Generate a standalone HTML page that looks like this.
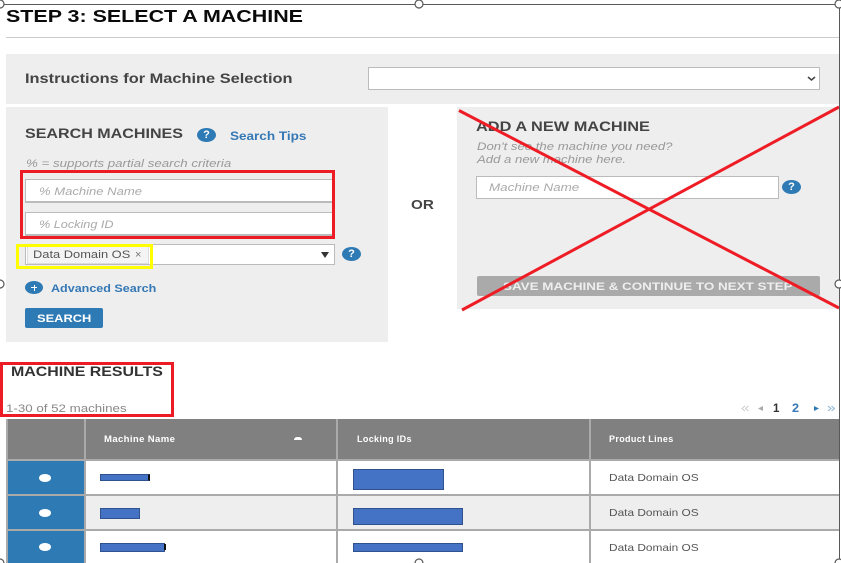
<!DOCTYPE html>
<html lang="en">
<head>
<meta charset="utf-8">
<title>Step 3: Select a Machine</title>
<style>
html,body{margin:0;padding:0;background:#fff;}
#p{position:relative;width:841px;height:563px;overflow:hidden;background:#fff;font-family:"Liberation Sans",sans-serif;}
#p div{position:absolute;box-sizing:border-box;}
.t{white-space:nowrap;line-height:14px;height:14px;transform-origin:0 50%;}
.b{font-weight:bold;}
.i{font-style:italic;}
.inp{background:#fff;border:1px solid #bbb;border-width:1px 1px 2px 1px;}
.help{width:19px;height:14px;border-radius:50%;background:#2e7ab5;color:#fff;font-size:11px;font-weight:bold;text-align:center;line-height:14px;}
.blk{background:#4472c4;border:1px solid #2f528f;}
.pl{font-size:10.5px;color:#555;transform:scaleX(1.13);}
.th{font-size:9px;font-weight:bold;color:#fff;letter-spacing:.35px;}
.sep{background:#aaa;}
</style>
</head>
<body>
<div id="p">
  <div class="t b" style="left:6px;top:9px;font-size:17.5px;line-height:15px;height:15px;transform:scaleX(1.225);color:#0a0a0a;">STEP 3: SELECT A MACHINE</div>
  <div style="left:6px;top:37px;width:833px;height:1px;background:#ccc;"></div>

  <div style="left:6px;top:54px;width:833px;height:50px;background:#eee;"></div>
  <div class="t b" style="left:25px;top:72px;font-size:13.5px;transform:scaleX(1.213);color:#444;">Instructions for Machine Selection</div>
  <div style="left:368px;top:67px;width:452px;height:23px;background:#fff;border:1px solid #bbb;"></div>
  <svg style="position:absolute;left:807px;top:76px" width="10" height="6"><path d="M1 1 L4.500 4 L8 1" fill="none" stroke="#444" stroke-width="1.500"/></svg>

  <div style="left:6px;top:107px;width:382px;height:235px;background:#eee;"></div>
  <div class="t b" style="left:25px;top:127px;font-size:13.5px;transform:scaleX(1.19);color:#444;">SEARCH MACHINES</div>
  <div class="help" style="left:197px;top:128px;">?</div>
  <div class="t b" style="left:230px;top:130px;font-size:11.5px;transform:scaleX(1.175);color:#3478b5;">Search Tips</div>
  <div class="t i" style="left:26px;top:157px;font-size:11px;transform:scaleX(1.21);color:#999;">% = supports partial search criteria</div>

  <div class="inp" style="left:25px;top:179px;width:308px;height:24px;"></div>
  <div class="t i" style="left:39px;top:185px;font-size:11px;transform:scaleX(1.186);color:#aaa;">% Machine Name</div>
  <div class="inp" style="left:25px;top:212px;width:308px;height:24px;"></div>
  <div class="t i" style="left:39px;top:218px;font-size:11px;transform:scaleX(1.15);color:#aaa;">% Locking ID</div>
  <div style="left:20px;top:170px;width:315px;height:69px;border:3.500px solid #ed1c24;"></div>

  <div style="left:25px;top:244px;width:310px;height:21px;background:#fff;border:1px solid #bbb;"></div>
  <div style="left:27px;top:246px;width:122px;height:18px;background:#f4f4f4;border:1px solid #ddd;"></div>
  <div class="t" style="left:33px;top:248px;font-size:11px;transform:scaleX(1.17);color:#555;">Data Domain OS</div>
  <div class="t" style="left:135px;top:248px;font-size:11px;color:#777;">×</div>
  <svg style="position:absolute;left:320px;top:252px" width="10" height="7"><path d="M1 0 H9 L5 6 Z" fill="#333"/></svg>
  <div style="left:16px;top:244px;width:137px;height:25px;border:3.500px solid #ff0;"></div>
  <div class="help" style="left:342px;top:247px;">?</div>

  <div style="left:25px;top:281px;width:18px;height:13px;border-radius:50%;background:#2e7ab5;"></div>
  <div style="left:31px;top:287px;width:6px;height:1px;background:#fff;"></div>
  <div style="left:34px;top:284.500px;width:1px;height:6px;background:#fff;"></div>
  <div class="t b" style="left:51px;top:282px;font-size:11px;transform:scaleX(1.14);color:#3478b5;">Advanced Search</div>
  <div style="left:25px;top:308px;width:78px;height:20px;background:#2e7ab5;border-radius:2px;"></div>
  <div class="t b" style="left:37px;top:312px;font-size:11px;transform:scaleX(1.17);color:#fff;">SEARCH</div>

  <div class="t b" style="left:411px;top:198px;font-size:13px;transform:scaleX(1.17);color:#444;">OR</div>

  <div style="left:457px;top:107px;width:382px;height:202px;background:#eee;"></div>
  <div class="t b" style="left:476px;top:120px;font-size:13.5px;transform:scaleX(1.21);color:#444;">ADD A NEW MACHINE</div>
  <div class="t i" style="left:477px;top:140px;font-size:11px;transform:scaleX(1.195);color:#999;">Don't see the machine you need?</div>
  <div class="t i" style="left:477px;top:153px;font-size:11px;transform:scaleX(1.195);color:#999;">Add a new machine here.</div>
  <div style="left:476px;top:176px;width:303px;height:23px;background:#fff;border:1px solid #bbb;"></div>
  <div class="t i" style="left:489px;top:181px;font-size:11px;transform:scaleX(1.22);color:#aaa;">Machine Name</div>
  <div class="help" style="left:782px;top:180px;">?</div>
  <div style="left:477px;top:276px;width:343px;height:20px;background:#aaa;border-radius:2px;"></div>
  <div class="t b" style="left:503px;top:280px;font-size:11px;transform:scaleX(1.22);color:#eee;">SAVE MACHINE &amp; CONTINUE TO NEXT STEP</div>

  <svg style="position:absolute;left:0;top:0" width="841" height="563">
    <line x1="459" y1="110.500" x2="839" y2="308" stroke="#ee1c25" stroke-width="3"/>
    <line x1="462" y1="310" x2="839" y2="107" stroke="#ee1c25" stroke-width="3"/>
  </svg>

  <div style="left:0;top:362px;width:174px;height:55px;border:3px solid #ed1c24;"></div>
  <div class="t b" style="left:11px;top:365px;font-size:13.5px;transform:scaleX(1.18);color:#333;">MACHINE RESULTS</div>
  <div class="t" style="left:6px;top:402px;font-size:11px;transform:scaleX(1.21);color:#888;">1-30 of 52 machines</div>

  <svg style="position:absolute;left:740px;top:403px" width="98" height="10">
    <path d="M5 3 L2 5.500 L5 8 M8.500 3 L5.500 5.500 L8.500 8" fill="none" stroke="#ccc" stroke-width="1"/>
    <path d="M23 3 V8 L18 5.500 Z" fill="#aaa"/>
    <path d="M74 3 V8 L79 5.500 Z" fill="#2e7ab5"/>
    <path d="M88 3 L91 5.500 L88 8 M91.500 3 L94.500 5.500 L91.500 8" fill="none" stroke="#8ab4d6" stroke-width="1"/>
  </svg>
  <div class="t b" style="left:773px;top:402px;font-size:11.5px;color:#333;">1</div>
  <div class="t b" style="left:792px;top:402px;font-size:11.5px;transform:scaleX(1.1);color:#3478b5;">2</div>

  <div style="left:7px;top:419px;width:832px;height:41px;background:#808080;"></div>
  <div style="left:7px;top:460px;width:77px;height:103px;background:#2e7ab5;"></div>
  <div style="left:85px;top:496px;width:754px;height:34px;background:#eee;"></div>

  <div class="sep" style="left:84px;top:419px;width:1.500px;height:144px;"></div>
  <div class="sep" style="left:336px;top:419px;width:1.500px;height:144px;"></div>
  <div class="sep" style="left:589px;top:419px;width:1.500px;height:144px;"></div>
  <div class="sep" style="left:7px;top:459px;width:832px;height:1.500px;"></div>
  <div class="sep" style="left:7px;top:494px;width:832px;height:1.500px;"></div>
  <div class="sep" style="left:7px;top:529px;width:832px;height:1.500px;"></div>
  <div class="sep" style="left:6px;top:419px;width:1.500px;height:144px;"></div>

  <div class="t th" style="left:104px;top:432px;transform:scaleX(1.06);">Machine Name</div>
  <div style="left:294px;top:437px;width:8px;height:3px;background:#fff;border-radius:4px 4px 0 0;"></div>
  <div class="t th" style="left:357px;top:432px;">Locking IDs</div>
  <div class="t th" style="left:609px;top:432px;">Product Lines</div>

  <div style="left:39px;top:474px;width:12px;height:8px;border-radius:50%;background:#fff;"></div>
  <div style="left:39px;top:509px;width:12px;height:8px;border-radius:50%;background:#fff;"></div>
  <div style="left:39px;top:543px;width:12px;height:8px;border-radius:50%;background:#fff;"></div>

  <div class="blk" style="left:100px;top:474px;width:50px;height:7px;border-right:2px solid #111;"></div>
  <div class="blk" style="left:100px;top:508px;width:40px;height:11px;"></div>
  <div class="blk" style="left:100px;top:543px;width:65px;height:9px;"></div>
  <div style="left:164px;top:544px;width:2px;height:6px;background:#111;"></div>

  <div class="blk" style="left:353px;top:469px;width:91px;height:21px;"></div>
  <div class="blk" style="left:353px;top:508px;width:110px;height:17px;"></div>
  <div class="blk" style="left:353px;top:543px;width:110px;height:9px;"></div>

  <div class="t pl" style="left:609px;top:471px;">Data Domain OS</div>
  <div class="t pl" style="left:609px;top:506px;">Data Domain OS</div>
  <div class="t pl" style="left:609px;top:541px;">Data Domain OS</div>

  <svg style="position:absolute;left:0;top:0" width="841" height="563">
    <g fill="none" stroke="#595959">
      <path d="M2 4.500 H837" stroke-width="1"/>
      <path d="M839.500 4 V563" stroke-width="1"/>
      <g fill="#fff" stroke-width="1.200">
        <circle cx="0" cy="4" r="4"/>
        <circle cx="419" cy="4" r="4"/>
        <circle cx="839" cy="4" r="4"/>
        <circle cx="839" cy="284" r="4"/>
        <circle cx="0" cy="284" r="4"/>
        <circle cx="0" cy="563" r="4"/>
        <circle cx="419" cy="563" r="4"/>
        <circle cx="839" cy="563" r="4"/>
      </g>
    </g>
  </svg>
</div>
</body>
</html>
